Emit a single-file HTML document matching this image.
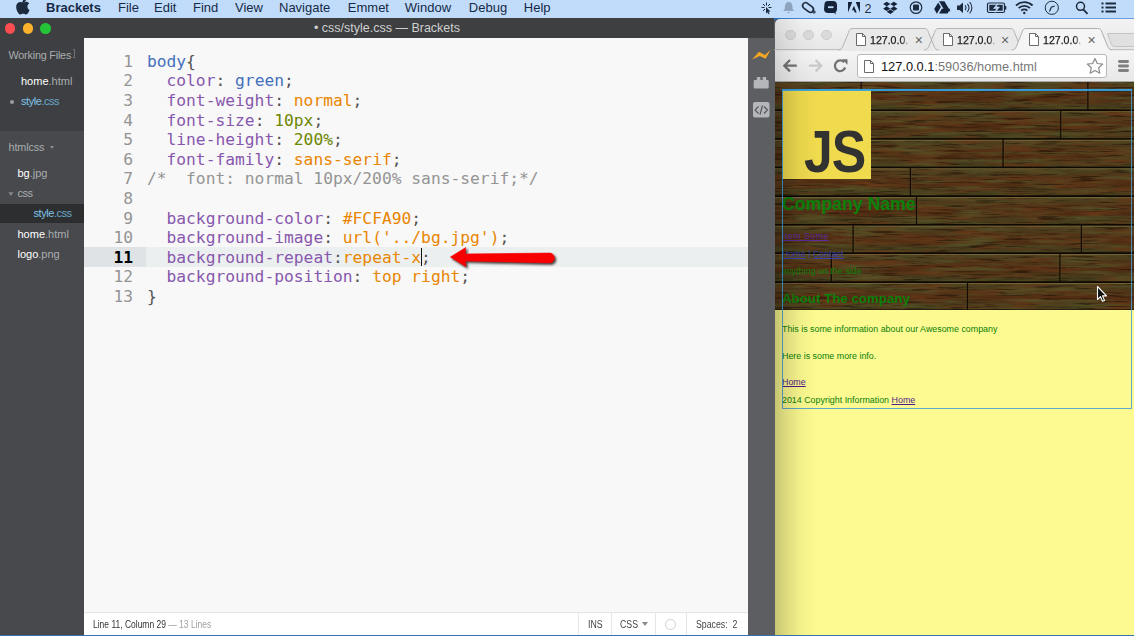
<!DOCTYPE html>
<html><head><meta charset="utf-8"><title>Brackets</title>
<style>
*{box-sizing:border-box;margin:0;padding:0}
html,body{width:1134px;height:636px;overflow:hidden;background:#5d5e62;font-family:"Liberation Sans",sans-serif}
.abs{position:absolute}
#menubar{left:0;top:0;width:1134px;height:18px;background:#c1dcfa}
#menubar span{position:absolute;top:-1px;font-size:13px;line-height:18px;color:#162a47;white-space:nowrap}
#title{left:0;top:18px;width:774px;height:20px;background:#3d3f41}
#title .t{position:absolute;left:0;width:774px;text-align:center;top:3px;font-size:12.5px;line-height:14px;color:#cfd0d0}
.dot{position:absolute;top:23px;width:10.5px;height:10.5px;border-radius:50%}
#side1{left:0;top:38px;width:84px;height:93px;background:#3d3f42}
#side2{left:0;top:131px;width:84px;height:504px;background:#47494c}
#side1 span,#side2 span{position:absolute;font-size:11px;white-space:nowrap;line-height:14px}
#side1 i,#side2 i{font-style:normal;color:#a9adaf}
#editor{left:84px;top:38px;width:664px;height:574px;background:#f8f8f8}
#status{left:84px;top:612px;width:664px;height:23px;background:#fff;border-top:1px solid #e6e6e6}
#rtool{left:748px;top:38px;width:26px;height:597px;background:#5d5e62}
.ln{position:absolute;left:0;width:49px;text-align:right;color:#949494}
.cl{position:absolute;left:62.9px;white-space:pre}
#code{font-family:"DejaVu Sans Mono","Liberation Mono",monospace;font-size:16.27px;line-height:19.6px;color:#535353}
.p{color:#8757ad}.b{color:#446fbd}.o{color:#e88501}.g{color:#6d8600}.c{color:#949494}
.tl{top:29.800px;width:10.600px;height:10.600px;border-radius:50%;background:#dadada;border:1px solid #cdcdcd}
.tt{position:absolute;top:33px;font-size:10.600px;line-height:14px;color:#1c1c1c;white-space:nowrap;-webkit-text-stroke:0.250px #1c1c1c;width:38.5px;overflow:hidden;-webkit-mask-image:linear-gradient(90deg,#000 82%,transparent)}
.tx{position:absolute;top:32.500px;font-size:14px;line-height:14px;color:#666}
.pg span{position:absolute;font-size:8.9px;line-height:12px;color:#0b800b;white-space:nowrap}
#status span{position:absolute;top:4.500px;font-size:10px;line-height:14px;color:#454545;white-space:nowrap;transform:scaleX(0.875);transform-origin:0 50%}
#status .dv{position:absolute;top:0;width:1px;height:23px;background:#e6e6e6}
</style></head><body>
<div class="abs" id="menubar">
<svg class="abs" style="left:15px;top:-3px" width="15" height="18" viewBox="0 0 15 18"><path fill="#1d2b3f" d="M10.3 4.3c.7-.9 1.1-2 1-3.2-1 .1-2.200.7-2.900 1.600-.6.800-1.100 1.900-1 3 1.100.1 2.200-.5 2.900-1.400zM12.400 9.600c0-2.100 1.700-3.100 1.800-3.200-1-1.400-2.500-1.600-3-1.600-1.300-.1-2.500.8-3.200.8-.6 0-1.600-.7-2.700-.7C3.900 4.900 2.600 5.700 1.900 7 .4 9.500 1.500 13.300 2.900 15.400c.7 1 1.500 2.100 2.600 2.100 1-.1 1.400-.7 2.700-.7s1.600.7 2.700.6c1.100 0 1.800-1 2.500-2 .8-1.200 1.100-2.300 1.100-2.300s-2.100-.9-2.100-3.500z"/></svg>
<svg class="abs" style="left:754px;top:0" width="380" height="18" viewBox="754 0 380 18">
<g fill="none" stroke="#1d2b3f" stroke-width="1.100">
<!-- sparkle cursor -->
<path d="M766.500 2.500v3M766.500 9.500v3M761.500 7.500h3M768.500 7.500h3M763 4l2 2M770 4l-2 2M763 11l2-2" stroke-width="1"/><path d="M766 7l4.500 4.500-2 .2 1 2-1 .5-1-2-1.500 1.300z" fill="#1d2b3f" stroke="none"/>
<!-- bell -->
<path d="M788.700 2c-3 0-3.800 2.500-3.800 5.500 0 2-1.200 3-1.900 3.500h11.400c-.7-.5-1.900-1.500-1.900-3.500 0-3-.8-5.500-3.800-5.500z" fill="#8fa5bf" stroke="none"/><path d="M787.500 12h2.400a1.200 1.200 0 0 1-2.400 0z" fill="#8fa5bf" stroke="none"/>
<!-- tag/pen -->
<rect x="802" y="4.500" width="12" height="6" rx="3" transform="rotate(38 808 7.500)" stroke-width="1.600"/><path d="M814 10v4M812 12h4" stroke-width="1"/>
<!-- blob -->
<path d="M824.500 4c0-2 1.500-3 3.500-3h5c2.500 0 4 1.500 4 4v4c0 2.500-1.500 4-4 4h-5c-2.500 0-4-1.500-4-4z" fill="#15233a" stroke="none"/><path d="M833 12l3 2.500-1-3.500z" fill="#15233a" stroke="none"/><rect x="828" y="6.300" width="5.500" height="1.800" fill="#c1dcfa" stroke="none"/>
<!-- Adobe -->
<path d="M848 2h4.300l-4.300 10.500zM860 2h-4.300l4.300 10.500zM854 5.800l2.700 6.700h-2l-.8-2.200h-2z" fill="#15233a" stroke="none"/>
<!-- dropbox -->
<path d="M886.300 1.500l-4 2.600 4 2.600 4-2.600zM894.300 1.500l-4 2.600 4 2.600 4-2.600zM882.300 9.300l4 2.600 4-2.600-4-2.600zM894.300 6.700l-4 2.600 4 2.600 4-2.600zM886.300 12.800l4 2.500 4-2.500-4-2.500z" fill="#15233a" stroke="none" transform="translate(0 -0.500) translate(890.300 8) scale(0.900) translate(-890.300 -8)"/>
<!-- stop circle -->
<circle cx="916" cy="7.600" r="5.800" stroke-width="1.200"/><rect x="913" y="4.600" width="6" height="6" rx="1" fill="#1d2b3f" stroke="none"/>
<!-- drive -->
<path d="M939 2h5.400l6 10h-5.400zM938.200 3.200l2.700 4.600-4 6.700-2.700-4.600zM941.800 9.600h8.500l-2.700 4.600h-8.500z" fill="#15233a" stroke="none" transform="translate(0 -0.800)"/>
<!-- volume -->
<path d="M957 5.500h2.500l3.500-3v10.500l-3.500-3h-2.500z" fill="#1d2b3f" stroke="none"/><path d="M965 5.500a3 3 0 0 1 0 4.500M967.300 3.800a5.500 5.500 0 0 1 0 8M969.600 2.200a8 8 0 0 1 0 11.200" stroke-width="1.100"/>
<!-- battery -->
<rect x="987.500" y="3" width="17" height="9.500" rx="1.500" stroke-width="1.200"/><rect x="989.300" y="4.800" width="13.400" height="5.900" fill="#1d2b3f" stroke="none"/><path d="M1005.500 6v3.500" stroke-width="1.600"/><path d="M997.500 3.500l-4 5h3l-1.500 4 4.500-5.500h-3z" fill="#c1dcfa" stroke="#c1dcfa" stroke-width="0.600"/>
<!-- wifi -->
<path d="M1016 5.500a12 12 0 0 1 16.600 0M1018.600 8.200a8.300 8.300 0 0 1 11.400 0M1021.200 10.700a4.600 4.600 0 0 1 6.200 0" stroke-width="1.800"/><circle cx="1024.300" cy="13" r="1.200" fill="#1d2b3f" stroke="none"/>
<!-- clock -->
<circle cx="1051.800" cy="7.800" r="6.600" stroke-width="1"/><path d="M1049.500 11.500l1.800-4.200 3.400-1.300" stroke-width="1.200"/>
<!-- search -->
<circle cx="1080.500" cy="6.300" r="4" stroke-width="1.500"/><path d="M1083.300 9.300l4.200 4.500" stroke-width="1.800"/>
<!-- list -->
<path d="M1105.500 3.500h10.500M1105.500 7.500h10.500M1105.500 11.500h10.500" stroke-width="1.800"/><path d="M1101.500 3.500h2M1101.500 7.500h2M1101.500 11.500h2" stroke-width="1.800"/>
</g>
<text x="864.500" y="12.500" font-family="Liberation Sans, sans-serif" font-size="12.500" fill="#1d2b3f">2</text>
</svg>
<span style="left:46px;font-weight:bold">Brackets</span>
<span style="left:118px">File</span>
<span style="left:154px">Edit</span>
<span style="left:193px">Find</span>
<span style="left:235px">View</span>
<span style="left:279px">Navigate</span>
<span style="left:347.800px">Emmet</span>
<span style="left:404.800px">Window</span>
<span style="left:468.800px">Debug</span>
<span style="left:523.800px">Help</span>
</div>
<div class="abs" id="title"><div class="t">• css/style.css — Brackets</div></div>
<div class="dot" style="left:4.800px;background:#fc4e50"></div>
<div class="dot" style="left:22.700px;background:#fdb22b"></div>
<div class="dot" style="left:40.400px;background:#23c436"></div>
<div class="abs" id="side1">
<span style="left:8.500px;top:9.600px;color:#a9adaf;font-size:10.800px;letter-spacing:-0.200px">Working Files</span>
<div class="abs" style="left:72.500px;top:11px;width:2px;height:9px;border:1px solid #85888b;border-left:0;opacity:.7"></div>
<span style="left:21px;top:36.200px;color:#fff">home<i>.html</i></span>
<div class="abs" style="left:9.800px;top:61.500px;width:4.200px;height:4.200px;border-radius:50%;background:#9a9c9e"></div>
<span style="left:21px;top:55.500px;color:#7fc2e6;letter-spacing:-0.450px">style<i style="color:#6aa9cc">.css</i></span>
</div>
<div class="abs" id="side2">
<span style="left:8.500px;top:9.100px;color:#a9adaf;font-size:10.800px;letter-spacing:-0.100px">htmlcss</span>
<div class="abs" style="left:49.500px;top:15px;border:2.200px solid transparent;border-top:3px solid #8a8d90;border-bottom:0"></div>
<span style="left:17.500px;top:34.900px;color:#fff">bg<i>.jpg</i></span>
<svg class="abs" style="left:8px;top:60px" width="7" height="6" viewBox="0 0 7 6"><path d="M0.300 1.200h5.200l-2.600 3.900z" fill="#85888b"/></svg>
<span style="left:17.500px;top:55.200px;color:#a9adaf;letter-spacing:-0.500px">css</span>
<div class="abs" style="left:0;top:73.200px;width:84px;height:18.700px;background:#2d2e30"></div>
<span style="left:33.500px;top:74.700px;color:#7fc2e6;letter-spacing:-0.450px">style<i style="color:#6aa9cc">.css</i></span>
<span style="left:17.500px;top:95.600px;color:#fff">home<i>.html</i></span>
<span style="left:17.500px;top:115.800px;color:#fff">logo<i>.png</i></span>
</div>
<div class="abs" id="editor"><div id="code">
<div class="ln" style="top:13.7px">1</div><div class="cl" style="top:13.7px"><span class="b">body</span>{</div>
<div class="ln" style="top:33.3px">2</div><div class="cl" style="top:33.3px">  <span class="p">color</span>: <span class="b">green</span>;</div>
<div class="ln" style="top:52.9px">3</div><div class="cl" style="top:52.9px">  <span class="p">font-weight</span>: <span class="o">normal</span>;</div>
<div class="ln" style="top:72.5px">4</div><div class="cl" style="top:72.5px">  <span class="p">font-size</span>: <span class="g">10px</span>;</div>
<div class="ln" style="top:92.1px">5</div><div class="cl" style="top:92.1px">  <span class="p">line-height</span>: <span class="g">200%</span>;</div>
<div class="ln" style="top:111.7px">6</div><div class="cl" style="top:111.7px">  <span class="p">font-family</span>: <span class="o">sans-serif</span>;</div>
<div class="ln" style="top:131.3px">7</div><div class="cl" style="top:131.3px"><span class="c">/*  font: normal 10px/200% sans-serif;*/</span></div>
<div class="ln" style="top:150.9px">8</div><div class="cl" style="top:150.9px"></div>
<div class="ln" style="top:170.5px">9</div><div class="cl" style="top:170.5px">  <span class="p">background-color</span>: <span class="o">#FCFA90</span>;</div>
<div class="ln" style="top:190.1px">10</div><div class="cl" style="top:190.1px">  <span class="p">background-image</span>: <span class="o">url('../bg.jpg')</span>;</div>
<div class="abs" style="left:0;top:209.1px;width:664px;height:19.6px;background:#eceff0"></div><div class="abs" style="left:0;top:209.1px;width:62.4px;height:19.6px;background:#dfe3e6"></div>
<div class="ln" style="top:209.7px;color:#000;font-weight:bold">11</div><div class="cl" style="top:209.7px">  <span class="p">background-repeat</span>:<span class="o">repeat-x</span>;</div>
<div class="ln" style="top:229.3px">12</div><div class="cl" style="top:229.3px">  <span class="p">background-position</span>: <span class="o">top right</span>;</div>
<div class="ln" style="top:248.9px">13</div><div class="cl" style="top:248.9px">}</div>
</div></div>
<div class="abs" id="status">
<span style="left:9px;color:#333;transform:scaleX(0.848)">Line 11, Column 29 <i style="font-style:normal;color:#a0a0a0">— 13 Lines</i></span>
<i class="dv" style="left:494px"></i><i class="dv" style="left:527px"></i><i class="dv" style="left:571px"></i><i class="dv" style="left:602px"></i>
<span style="left:503.500px">INS</span>
<span style="left:536px">CSS</span>
<div class="abs" style="left:557.500px;top:9px;border:3.500px solid transparent;border-top:4.500px solid #8a8a8a;border-bottom:0"></div>
<div class="abs" style="left:581px;top:5.500px;width:11px;height:11px;border-radius:50%;border:1px solid #cfcfcf"></div>
<span style="left:611.500px">Spaces:&nbsp; 2</span>
</div>
<div class="abs" style="left:421px;top:248px;width:1.400px;height:18px;background:#111"></div>
<svg class="abs" style="left:444px;top:242px" width="120" height="32" viewBox="444 242 120 32"><defs><filter id="sh" x="-10%" y="-30%" width="120%" height="180%"><feGaussianBlur stdDeviation="0.900"/></filter></defs>
<path d="M450.400 257 L465.700 247.600 L465.200 254 L549.500 253.100 A4.900 4.900 0 0 1 549.500 262.900 L465.300 260.900 L466 266.700 Z" transform="translate(1.600 1.700)" fill="#1a0a0a" opacity="0.800" filter="url(#sh)" stroke="#1a0a0a" stroke-width="0.600" stroke-linejoin="round"/>
<path d="M450.400 257 L465.700 247.600 L465.200 254 L549.500 253.100 A4.900 4.900 0 0 1 549.500 262.900 L465.300 260.900 L466 266.700 Z" fill="#f80000" stroke="#f80000" stroke-width="0.600" stroke-linejoin="round"/></svg>
<div class="abs" id="rtool">
<svg class="abs" style="left:0;top:0" width="26" height="30" viewBox="0 0 26 30"><path d="M4 21.500 L11.100 13.800 L16.800 17 L22.600 12.100 L17.600 20.800 L11.800 17.900 Z" fill="#f5a623"/></svg>
<svg class="abs" style="left:5px;top:38px" width="17" height="13" viewBox="0 0 17 13"><path d="M1.500 4h2.300v-2.200a.8.800 0 0 1 .8-.8h2a.8.800 0 0 1 .8.800v2.200h2.200v-2.200a.8.800 0 0 1 .8-.8h2a.8.800 0 0 1 .8.800v2.200h1.500a1 1 0 0 1 1 1v6.500a1 1 0 0 1-1 1h-13a1 1 0 0 1-1-1v-6.500a1 1 0 0 1 1-1z" fill="#b5b6b9"/></svg>
<svg class="abs" style="left:5px;top:64px" width="17" height="16" viewBox="0 0 17 16"><rect x="0" y="0" width="16.500" height="15.600" rx="2" fill="#b5b6b9"/><path d="M5.500 4.500L2 8l3.500 3.500M11 4.500L14.500 8 11 11.500M9.500 3.500L7 12.500" fill="none" stroke="#505256" stroke-width="1.100"/></svg>
</div>
<div class="abs" id="chrome">
<div class="abs" style="left:774px;top:17.700px;width:360px;height:2px;background:linear-gradient(90deg,#2a68bb,#4d8ad6 30px,#6a9ee0)"></div>
<div class="abs" style="left:774.500px;top:19.300px;width:360px;height:31px;background:linear-gradient(#f3f3f3,#e7e7e7);border-top-left-radius:5px"></div>
<div class="abs" style="left:774.500px;top:50px;width:360px;height:32.300px;background:linear-gradient(#f5f5f5,#e8e8e8);border-bottom:1px solid #a9a9a9"></div>
<div class="abs" style="left:774.500px;top:82px;width:360px;height:553px;background:#fcfa90"></div>
<svg class="abs" id="wood" style="left:774.500px;top:82px" width="360" height="228.2" viewBox="774 82 360 228.2"><defs><filter id="gr" color-interpolation-filters="sRGB" x="0" y="0" width="100%" height="100%"><feTurbulence type="fractalNoise" baseFrequency="0.03 0.55" numOctaves="4" seed="4"/><feColorMatrix type="matrix" values="0 0 0 0 0.10  0 0 0 0 0.05  0 0 0 0 0.02  3 3 0 0 -3.15"/><feComponentTransfer><feFuncA type="linear" slope="0.55"/></feComponentTransfer></filter><filter id="rd" color-interpolation-filters="sRGB" x="0" y="0" width="100%" height="100%"><feTurbulence type="fractalNoise" baseFrequency="0.02 0.18" numOctaves="3" seed="11"/><feColorMatrix type="matrix" values="0 0 0 0 0.40  0 0 0 0 0.215  0 0 0 0 0.09  0 2.4 0 0 -1.0"/></filter><filter id="ol" color-interpolation-filters="sRGB" x="0" y="0" width="100%" height="100%"><feTurbulence type="fractalNoise" baseFrequency="0.018 0.25" numOctaves="3" seed="23"/><feColorMatrix type="matrix" values="0 0 0 0 0.33  0 0 0 0 0.32  0 0 0 0 0.15  0 0 2.4 0 -1.05"/></filter><linearGradient id="pl" x1="0" y1="0" x2="0" y2="1"><stop offset="0" stop-color="#4e4a24"/><stop offset="0.22" stop-color="#4b3a1b"/><stop offset="0.45" stop-color="#552f14"/><stop offset="0.62" stop-color="#4d2c12"/><stop offset="0.8" stop-color="#483a1b"/><stop offset="1" stop-color="#3f3e1d"/></linearGradient></defs>
<rect x="774" y="82" width="360" height="228.2" fill="#493518"/>
<rect x="774.0" y="82.0" width="312.9" height="28.2" fill="url(#pl)"/><rect x="1086.9" y="82.0" width="47.1" height="28.2" fill="url(#pl)"/><rect x="774.0" y="110.2" width="285.7" height="28.6" fill="url(#pl)"/><rect x="1059.7" y="110.2" width="74.3" height="28.6" fill="url(#pl)"/><rect x="774.0" y="138.8" width="228.1" height="28.5" fill="url(#pl)"/><rect x="1002.1" y="138.8" width="131.9" height="28.5" fill="url(#pl)"/><rect x="774.0" y="167.3" width="135.4" height="28.7" fill="url(#pl)"/><rect x="909.4" y="167.3" width="224.6" height="28.7" fill="url(#pl)"/><rect x="774.0" y="196.0" width="141.5" height="28.7" fill="url(#pl)"/><rect x="915.5" y="196.0" width="218.5" height="28.7" fill="url(#pl)"/><rect x="774.0" y="224.7" width="78.1" height="28.3" fill="url(#pl)"/><rect x="852.1" y="224.7" width="228.3" height="28.3" fill="url(#pl)"/><rect x="1080.4" y="224.7" width="53.6" height="28.3" fill="url(#pl)"/><rect x="774.0" y="253.0" width="56.3" height="29.0" fill="url(#pl)"/><rect x="830.3" y="253.0" width="228.6" height="29.0" fill="url(#pl)"/><rect x="1058.9" y="253.0" width="75.1" height="29.0" fill="url(#pl)"/><rect x="774.0" y="282.0" width="192.5" height="28.2" fill="url(#pl)"/><rect x="966.5" y="282.0" width="167.5" height="28.2" fill="url(#pl)"/>
<rect x="774" y="82" width="360" height="228.2" filter="url(#rd)"/><rect x="774" y="82" width="360" height="228.2" filter="url(#ol)"/><rect x="774" y="82" width="360" height="228.2" filter="url(#gr)"/>
<rect x="774" y="109.5" width="360" height="1.7" fill="#0f0903"/><rect x="774" y="111.2" width="360" height="1" fill="#8a7448" opacity="0.6"/><rect x="1086.3" y="82.0" width="1.3" height="28.2" fill="#120b04"/><rect x="1087.6" y="83.0" width="0.8" height="26.2" fill="#6a5530" opacity="0.35"/><rect x="774" y="138.1" width="360" height="1.7" fill="#0f0903"/><rect x="774" y="139.8" width="360" height="1" fill="#8a7448" opacity="0.6"/><rect x="1059.1" y="110.2" width="1.3" height="28.6" fill="#120b04"/><rect x="1060.4" y="111.2" width="0.8" height="26.6" fill="#6a5530" opacity="0.35"/><rect x="774" y="166.6" width="360" height="1.7" fill="#0f0903"/><rect x="774" y="168.3" width="360" height="1" fill="#8a7448" opacity="0.6"/><rect x="1001.5" y="138.8" width="1.3" height="28.5" fill="#120b04"/><rect x="1002.8" y="139.8" width="0.8" height="26.5" fill="#6a5530" opacity="0.35"/><rect x="774" y="195.3" width="360" height="1.7" fill="#0f0903"/><rect x="774" y="197.0" width="360" height="1" fill="#8a7448" opacity="0.6"/><rect x="908.8" y="167.3" width="1.3" height="28.7" fill="#120b04"/><rect x="910.1" y="168.3" width="0.8" height="26.7" fill="#6a5530" opacity="0.35"/><rect x="774" y="224.0" width="360" height="1.7" fill="#0f0903"/><rect x="774" y="225.7" width="360" height="1" fill="#8a7448" opacity="0.6"/><rect x="914.9" y="196.0" width="1.3" height="28.7" fill="#120b04"/><rect x="916.2" y="197.0" width="0.8" height="26.7" fill="#6a5530" opacity="0.35"/><rect x="774" y="252.3" width="360" height="1.7" fill="#0f0903"/><rect x="774" y="254.0" width="360" height="1" fill="#8a7448" opacity="0.6"/><rect x="851.5" y="224.7" width="1.3" height="28.3" fill="#120b04"/><rect x="852.8" y="225.7" width="0.8" height="26.3" fill="#6a5530" opacity="0.35"/><rect x="1079.8" y="224.7" width="1.3" height="28.3" fill="#120b04"/><rect x="1081.1" y="225.7" width="0.8" height="26.3" fill="#6a5530" opacity="0.35"/><rect x="774" y="281.3" width="360" height="1.7" fill="#0f0903"/><rect x="774" y="283.0" width="360" height="1" fill="#8a7448" opacity="0.6"/><rect x="829.7" y="253.0" width="1.3" height="29.0" fill="#120b04"/><rect x="831.0" y="254.0" width="0.8" height="27.0" fill="#6a5530" opacity="0.35"/><rect x="1058.3" y="253.0" width="1.3" height="29.0" fill="#120b04"/><rect x="1059.6" y="254.0" width="0.8" height="27.0" fill="#6a5530" opacity="0.35"/><rect x="774" y="309.5" width="360" height="1.7" fill="#0f0903"/><rect x="774" y="311.2" width="360" height="1" fill="#8a7448" opacity="0.6"/><rect x="965.9" y="282.0" width="1.3" height="28.2" fill="#120b04"/><rect x="967.2" y="283.0" width="0.8" height="26.2" fill="#6a5530" opacity="0.35"/><rect x="859.6" y="82" width="1.2" height="8" fill="#120b04"/></svg>

<svg class="abs" style="left:774px;top:19px" width="360" height="32" viewBox="774 19 360 32"><path d="M774 49.700H1134" stroke="#b9b9b9" stroke-width="1" fill="none"/><path d="M838 50 C841 50 842 48.5 843 46 L848.5 32.5 C849.5 29.5 850 28.5 853 28.5 L924 28.5 C927 28.5 927.5 29.5 928.5 32.5 L934 46 C935 48.5 936 50 939 50 Z" fill="#e9e9e9"/><path d="M924 50 C927 50 928 48.5 929 46 L934.5 32.5 C935.5 29.5 936 28.5 939 28.5 L1010 28.5 C1013 28.5 1013.5 29.5 1014.5 32.5 L1020 46 C1021 48.5 1022 50 1025 50 Z" fill="#e9e9e9"/><path d="M838 50 C841 50 842 48.5 843 46 L848.5 32.5 C849.5 29.5 850 28.5 853 28.5 L924 28.5 C927 28.5 927.5 29.5 928.5 32.5 L934 46 C935 48.5 936 50 939 50" fill="none" stroke="#b4b4b4" stroke-width="1"/><path d="M924 50 C927 50 928 48.5 929 46 L934.5 32.5 C935.5 29.5 936 28.5 939 28.5 L1010 28.5 C1013 28.5 1013.5 29.5 1014.5 32.5 L1020 46 C1021 48.5 1022 50 1025 50" fill="none" stroke="#b4b4b4" stroke-width="1"/><path d="M1107.500 33.500 H1140 V46.500 H1115 C1112.500 46.500 1112 45.500 1111 43 Z" fill="#e0e0e0" stroke="#c4c4c4" stroke-width="1"/><path d="M1011.5 50 C1014.5 50 1015.5 48.5 1016.5 46 L1022 32.5 C1023 29.5 1023.5 28.5 1026.5 28.5 L1097.5 28.5 C1100.5 28.5 1101 29.5 1102 32.5 L1107.5 46 C1108.5 48.5 1109.5 50 1112.5 50 L1115 51 L1010 51 Z" fill="#f5f5f5"/><path d="M1011.5 50 C1014.5 50 1015.5 48.5 1016.5 46 L1022 32.5 C1023 29.5 1023.5 28.5 1026.5 28.5 L1097.5 28.5 C1100.5 28.5 1101 29.5 1102 32.5 L1107.5 46 C1108.5 48.5 1109.5 50 1112.5 50" fill="none" stroke="#aeaeae" stroke-width="1"/></svg>
<div class="abs tl" style="left:785px"></div><div class="abs tl" style="left:803px"></div><div class="abs tl" style="left:821px"></div>
<svg class="abs" style="left:856px;top:33px" width="10" height="13" viewBox="0 0 10 13"><path d="M0.5 0.5h6l3 3v9h-9z" fill="#fff" stroke="#6b6b6b" stroke-width="1"/><path d="M6.500 0.500v3h3" fill="none" stroke="#6b6b6b" stroke-width="1"/></svg><span class="tt" style="left:870px">127.0.0.</span><span class="tx" style="left:914.800px">×</span>
<svg class="abs" style="left:943px;top:33px" width="10" height="13" viewBox="0 0 10 13"><path d="M0.5 0.5h6l3 3v9h-9z" fill="#fff" stroke="#6b6b6b" stroke-width="1"/><path d="M6.500 0.500v3h3" fill="none" stroke="#6b6b6b" stroke-width="1"/></svg><span class="tt" style="left:957px">127.0.0.</span><span class="tx" style="left:1001px">×</span>
<svg class="abs" style="left:1029px;top:33px" width="10" height="13" viewBox="0 0 10 13"><path d="M0.5 0.5h6l3 3v9h-9z" fill="#fff" stroke="#6b6b6b" stroke-width="1"/><path d="M6.500 0.500v3h3" fill="none" stroke="#6b6b6b" stroke-width="1"/></svg><span class="tt" style="left:1043px">127.0.0.</span><span class="tx" style="left:1087.500px">×</span>
<svg class="abs" style="left:774px;top:50px" width="90" height="32" viewBox="774 50 90 32"><g fill="none" stroke="#737373" stroke-width="2.300" stroke-linecap="butt"><path d="M785 65.700h11.800M790 60l-5.700 5.700 5.700 5.700"/><path d="M808.900 65.700h11.600M815.600 60l5.700 5.700-5.700 5.700" stroke="#c9c9c9"/><path d="M844.200 62.300A5.300 5.300 0 1 0 845.200 67.500"/></g><path d="M842 59.300h5.500v5.500z" fill="#737373"/></svg>
<div class="abs" style="left:857px;top:54.300px;width:250px;height:23.500px;background:#fff;border:1px solid #b8b8b8;border-radius:3px"></div>
<svg class="abs" style="left:864px;top:59.8px" width="10" height="13" viewBox="0 0 10 13"><path d="M0.5 0.5h6l3 3v9h-9z" fill="#fff" stroke="#6b6b6b" stroke-width="1"/><path d="M6.500 0.500v3h3" fill="none" stroke="#6b6b6b" stroke-width="1"/></svg>
<span class="abs" style="left:881px;top:58px;font-size:12.800px;line-height:17px;color:#111;white-space:nowrap">127.0.0.1<span style="color:#777">:59036/home.html</span></span>
<svg class="abs" style="left:1086px;top:57px" width="18" height="18" viewBox="0 0 18 18"><path d="M9 1.500l2.300 5 5.400.6-4 3.700 1.100 5.400L9 13.500l-4.800 2.700 1.100-5.400-4-3.700 5.400-.6z" fill="#fff" stroke="#8a8a8a" stroke-width="1.200" stroke-linejoin="round"/></svg>
<div class="abs" style="left:1118px;top:60px;width:11.200px;height:2.800px;border-radius:1.400px;background:#808080;box-shadow:0 4.500px 0 #808080,0 9px 0 #808080"></div>

<div class="abs" style="left:782px;top:90px;width:89px;height:89px;background:#f0db4f"></div>
<span class="abs" style="left:804px;top:122px;font-size:59.400px;line-height:60px;font-weight:bold;color:#323330;letter-spacing:-1px;transform-origin:0 0;transform:scale(0.87,1)">JS</span>
<div class="pg">
<span style="left:782px;top:192px;font-size:17.7px;line-height:24px;font-weight:bold">Company Name</span>
<span style="left:782px;top:230px;color:#5a2c9c;text-decoration:underline;letter-spacing:0.45px">Item Some</span>
<span style="left:782px;top:248px;color:#3d3fb0"><u>Home</u> | <u>Contact</u></span>
<span style="left:782px;top:265px">anything on the side</span>
<span style="left:782px;top:290px;font-size:13.3px;line-height:18px;font-weight:bold">About The company</span>
<span style="left:782px;top:323px">This is some information about our Awesome company</span>
<span style="left:782px;top:349.500px">Here is some more info.</span>
<span style="left:782px;top:376px;color:#551a8b;text-decoration:underline">Home</span>
<span style="left:782px;top:394px">2014 Copyright Information <u style="color:#551a8b">Home</u></span>
</div>
<div class="abs" style="left:782px;top:89.400px;width:350px;height:319.300px;border:1px solid rgba(70,155,215,0.85)"></div>
<div class="abs" style="left:782px;top:89.200px;width:350px;height:1.500px;background:rgba(50,160,228,0.9)"></div><div class="abs" style="left:782px;top:89.400px;width:1.200px;height:221px;background:rgba(50,160,228,0.6)"></div>
<div class="abs" style="left:774.500px;top:19.300px;width:42px;height:616px;background:linear-gradient(90deg,rgba(0,0,0,0.21) 0,rgba(0,0,0,0.13) 10px,rgba(0,0,0,0.04) 25px,rgba(0,0,0,0) 42px);-webkit-mask-image:linear-gradient(180deg,rgba(0,0,0,0.45) 0,rgba(0,0,0,0.6) 62px,#000 75px)"></div>
<svg class="abs" style="left:1096px;top:285.300px" width="13" height="18" viewBox="0 0 13 18"><path d="M1.500 1.500v13l3-2.800 2 4.600 2-.9-2-4.500h4z" fill="#111" stroke="#fff" stroke-width="1.100" stroke-linejoin="round"/></svg>

</div>
<div class="abs" style="left:0;top:635px;width:1134px;height:1px;background:#3a6fb0"></div>
</body></html>
